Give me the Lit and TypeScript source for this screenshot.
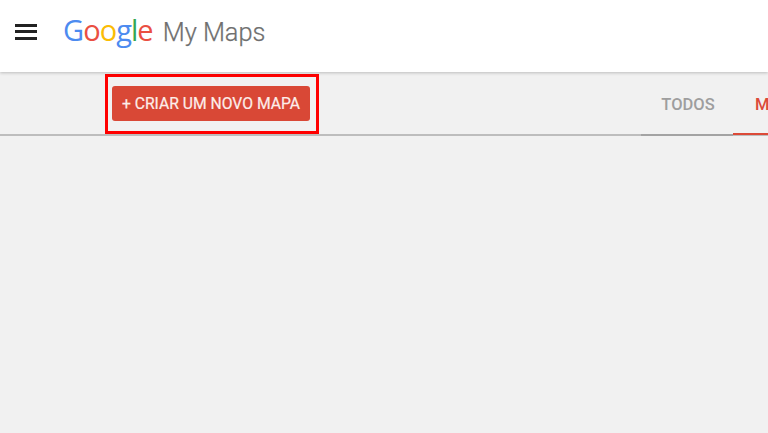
import { LitElement, html, css } from "lit";
import { customElement } from "lit/decorators.js";

@customElement("app-root")
export class AppRoot extends LitElement {
  static styles = css`
    :host { display: block; width: 768px; height: 433px; overflow: hidden; background: #f1f1f1; font-family: Roboto, "Liberation Sans", sans-serif; }
    .header { height: 72px; box-sizing: border-box; background: #fff; display: flex; align-items: center; box-shadow: 0 1px 3px rgba(0,0,0,.22); position: relative; padding: 0 0 9px 15px; }
    .menu { display: flex; flex-direction: column; gap: 3.5px; width: 22px; }
    .menu i { display: block; height: 3px; background: #222; }
    .logo { margin-left: 27px; display: flex; align-items: baseline; margin-bottom: 3px; }
    .google { font-family: "Open Sans", sans-serif; font-size: 29px; font-weight: 500; letter-spacing: -0.95px; line-height: 36px; margin-left: -1px; }
    .b { color: #4c8bf0; } .r { color: #ea4f42; } .y { color: #fbbc05; } .g { color: #34a853; }
    .product { font-family: Roboto, sans-serif; font-size: 25.4px; font-weight: 300; color: #6f6f6f; margin-left: 10px; -webkit-text-stroke: .25px #6f6f6f; }
    .toolbar { height: 64px; box-sizing: border-box; border-bottom: 2px solid #bdbdbd; display: flex; align-items: flex-start; padding: 2px 0 0 105px; }
    .mark { border: 3px solid #f00; padding: 9px 6px 10px 4px; box-sizing: border-box; height: 60px; width: 214px; flex: none; }
    .create { width: 198px; height: 35px; box-sizing: border-box; border: 0; border-radius: 3px; background: #d94836; color: #fdeeea; font: 400 15.7px/35px Roboto, sans-serif; -webkit-text-stroke: .2px #fdeeea; padding: 0; text-align: center; white-space: nowrap; display: block; }
    .tabs { margin-left: auto; display: flex; height: 62px; flex: none; width: 449px; justify-content: flex-end; overflow: hidden; }
    .tab { font-size: 16.5px; font-weight: 500; line-height: 62px; color: #9e9e9e; white-space: nowrap; box-sizing: border-box; }
    .todos { width: 92px; height: 62px; padding-left: 2px; text-align: center; border-bottom: 2px solid #a3a3a3; }
    .mine { color: #dc4a38; width: 35px; height: 61px; padding-left: 22px; overflow: hidden; border-bottom: 2px solid #dc4a38; flex: none; }
  `;

  render() {
    return html`
      <div class="header">
        <div class="menu"><i></i><i></i><i></i></div>
        <div class="logo">
          <span class="google"><span class="b">G</span><span class="r">o</span><span class="y">o</span><span class="b">g</span><span class="g">l</span><span class="r">e</span></span>
          <span class="product">My Maps</span>
        </div>
      </div>
      <div class="toolbar">
        <div class="mark"><button class="create">+ CRIAR UM NOVO MAPA</button></div>
        <div class="tabs">
          <div class="tab todos">TODOS</div>
          <div class="tab mine">MEUS MAPAS</div>
        </div>
      </div>
    `;
  }
}
